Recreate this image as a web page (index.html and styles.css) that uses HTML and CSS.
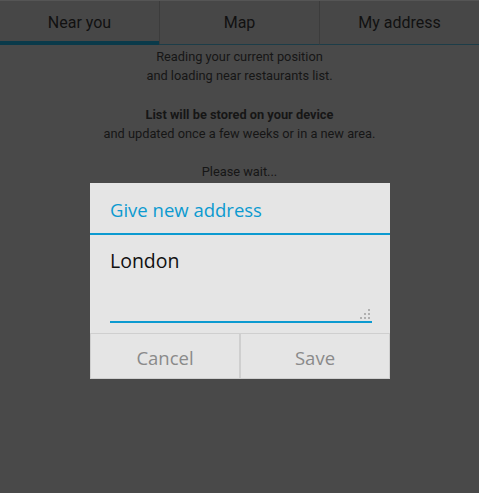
FILE: index.html
```html
<!DOCTYPE html>
<html lang="en">
<head>
  <meta charset="UTF-8">
  <title>Restaurants</title>
  <meta name="viewport" content="width=device-width, initial-scale=1.0">
  <link rel="stylesheet" href="styles.css">
</head>
<body>
  <div class="pestanas">
    <div class="pestana activa">Near you</div>
    <div class="pestana">Map</div>
    <div class="pestana">My address</div>
  </div>

  <div class="mensaje">
    <p>Reading your current position<br>and loading near restaurants list.</p>
    <p><strong>List will be stored on your device</strong><br>and updated once a few weeks or in a new area.</p>
    <p>Please wait...</p>
  </div>

  <div class="dialogo">
    <div class="dialogo-titulo">Give new address</div>
    <div class="dialogo-cuerpo">
      <div class="campo">
        London
        <svg class="agarre" width="10" height="10" viewBox="0 0 10 10">
          <rect x="8" y="0" width="2" height="2" />
          <rect x="4" y="4" width="2" height="2" />
          <rect x="8" y="4" width="2" height="2" />
          <rect x="0" y="8" width="2" height="2" />
          <rect x="4" y="8" width="2" height="2" />
          <rect x="8" y="8" width="2" height="2" />
        </svg>
      </div>
    </div>
    <div class="dialogo-botones">
      <button>Cancel</button>
      <button>Save</button>
    </div>
  </div>
</body>
</html>
```
FILE: styles.css
```css
body {
  margin: 0;
  background-color: #494949;
  font-family: Roboto, Arial, sans-serif;
  color: #161616;
  position: relative;
  height: 493px;
  overflow: hidden;
}

.pestanas {
  display: flex;
  height: 45px;
  background-color: #474747;
  border-top: 1px solid #555;
  box-sizing: border-box;
}

.pestana {
  flex: 1;
  text-align: center;
  font-size: 16px;
  line-height: 43px;
  color: #111;
  border-right: 1px solid #3c3c3c;
  border-bottom: 1px solid #1d3d48;
}

.pestana:last-child {
  border-right: none;
}

.pestana.activa {
  border-bottom-color: #0a3a4a;
  box-shadow: inset 0 -3px #0a3a4a;
}

.mensaje {
  text-align: center;
  font-size: 12.8px;
  line-height: 19px;
  padding-top: 2px;
}

.mensaje p {
  margin: 0 0 19.5px;
}

.dialogo {
  position: absolute;
  left: 90px;
  top: 183px;
  width: 300px;
  background-color: #e5e5e5;
  font-family: "Open Sans", sans-serif;
}

.dialogo-titulo {
  height: 50px;
  line-height: 54px;
  padding-left: 20px;
  font-size: 18.5px;
  color: #0c9ad0;
  border-bottom: 2px solid #0c9ad0;
}

.dialogo-cuerpo {
  padding: 14px 18px 10px 20px;
}

.campo {
  position: relative;
  height: 72px;
  font-size: 19.5px;
  line-height: 24px;
  color: #111;
  border-bottom: 2px solid #0c9ad0;
}

.agarre {
  position: absolute;
  right: 2px;
  bottom: 2px;
  fill: #b0b0b0;
}

.dialogo-botones {
  display: flex;
  border-top: 1px solid #cfcfcf;
}

.dialogo-botones button {
  flex: 1;
  height: 45px;
  padding: 3px 0 0;
  background: #e5e5e5;
  border: none;
  border-right: 1px solid #cfcfcf;
  border-bottom: 1px solid #cfcfcf;
  border-left: 1px solid #cfcfcf;
  font-family: "Open Sans", sans-serif;
  font-size: 18.5px;
  color: #8a8a8a;
}
```
